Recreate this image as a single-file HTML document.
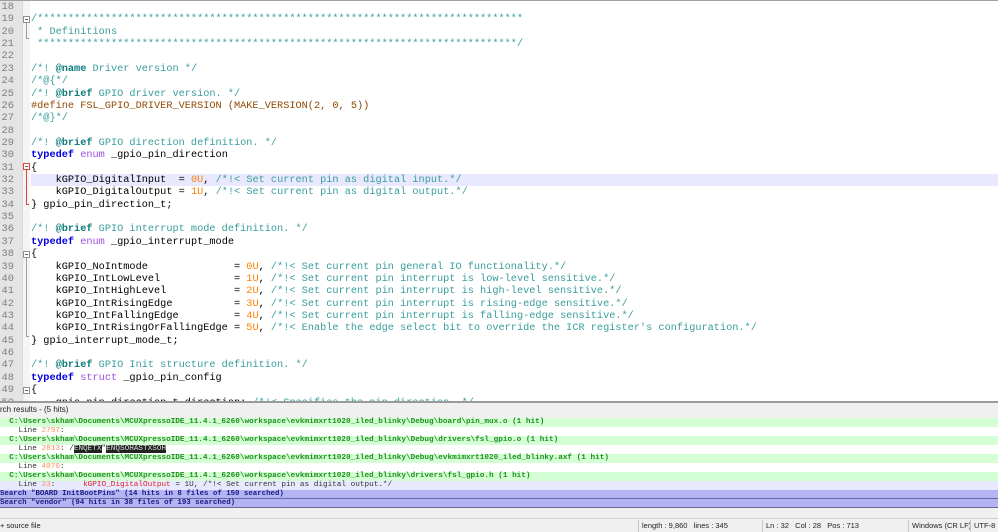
<!DOCTYPE html>
<html><head><meta charset="utf-8"><style>
*{margin:0;padding:0;box-sizing:border-box}
body{width:998px;height:532px;overflow:hidden;background:#fff;position:relative;font-family:"Liberation Mono",monospace}
#ed{position:absolute;left:0;top:0;width:998px;height:401px;overflow:hidden;border-top:1px solid #a0a0a0;background:#fff}
#gut{position:absolute;left:0;top:0;width:22px;height:401px;background:#e4e4e4}
#fold{position:absolute;left:22px;top:0;width:8px;height:401px;background:#f4f4f4;border-left:1px solid #d8d8d8}
.l{position:absolute;left:0;height:12.36px;width:998px;font-size:10.25px;line-height:12.36px;white-space:pre}
.n{position:absolute;left:0;width:14px;text-align:right;color:#808080;font-size:10.4px}
.c{position:absolute;left:31px}
.cur{background:#e8e8ff}
.cm{color:#3a9d9d}.b{color:#0e7c7c;font-weight:bold}.kw{color:#0000e0;font-weight:bold}.en{color:#9a4fe0}.nu{color:#ff8000}.pp{color:#904800}
#hdr{position:absolute;left:0;top:401px;width:998px;height:17px;background:#f0f0f0;border-top:2px solid #9a9a9a;font-family:"Liberation Sans",sans-serif;font-size:8px;line-height:14px;color:#222}
.r{position:absolute;left:0;width:998px;height:9px;font-size:7.7px;line-height:9px;white-space:pre;font-weight:bold}
.g{background:#d4ffd4;color:#1f8f1f}
.w{background:#fff;color:#333;font-weight:normal}
.sr{background:#b4b4f4;color:#1a1a80;border-bottom:1px solid #6a6a9a;font-size:7.4px}
#gray{position:absolute;left:0;top:508px;width:998px;height:10px;background:#f0f0f0}
#st{position:absolute;left:0;top:518px;width:998px;height:14px;background:#f0f0f0;border-top:1px solid #d0d0d0;font-family:"Liberation Sans",sans-serif;font-size:7.5px;line-height:13px;color:#222}
#st span{position:absolute;top:0}
.sep{position:absolute;top:1px;width:1px;height:12px;background:#c8c8c8}
.fb{position:absolute;left:23px;width:7px;height:7px;border:1px solid #909090;background:#fff}
.fb::after{content:"";position:absolute;left:1px;top:2px;width:3px;height:1px;background:#606060}
</style></head><body>
<div id="ed">
<div id="gut"></div><div id="fold"></div>
<div class="fb" style="top:15px"></div>
<div style="position:absolute;left:26px;top:22px;width:1px;height:16px;background:#a0a0a0"></div>
<div style="position:absolute;left:26px;top:37px;width:3px;height:1px;background:#a0a0a0"></div>
<div style="position:absolute;left:26px;top:168px;width:1px;height:36px;background:#e04040"></div>
<div style="position:absolute;left:26px;top:203px;width:3px;height:1px;background:#e04040"></div>
<div class="fb" style="top:162px;border-color:#e04040"></div>
<div class="fb" style="top:250px"></div>
<div style="position:absolute;left:26px;top:257px;width:1px;height:79px;background:#a0a0a0"></div>
<div style="position:absolute;left:26px;top:335px;width:3px;height:1px;background:#a0a0a0"></div>
<div class="fb" style="top:386px"></div>
<div class="l" style="top:0px"><span class="n">18</span></div>
<div class="l" style="top:12.36px"><span class="n">19</span><span class="c cm">/*******************************************************************************</span></div>
<div class="l" style="top:24.72px"><span class="n">20</span><span class="c cm"> * Definitions</span></div>
<div class="l" style="top:37.08px"><span class="n">21</span><span class="c cm"> ******************************************************************************/</span></div>
<div class="l" style="top:49.44px"><span class="n">22</span></div>
<div class="l" style="top:61.8px"><span class="n">23</span><span class="c cm">/*! <span class="b">@name</span> Driver version */</span></div>
<div class="l" style="top:74.16px"><span class="n">24</span><span class="c cm">/*@{*/</span></div>
<div class="l" style="top:86.52px"><span class="n">25</span><span class="c cm">/*! <span class="b">@brief</span> GPIO driver version. */</span></div>
<div class="l" style="top:98.88px"><span class="n">26</span><span class="c pp">#define FSL_GPIO_DRIVER_VERSION (MAKE_VERSION(2, 0, 5))</span></div>
<div class="l" style="top:111.24px"><span class="n">27</span><span class="c cm">/*@}*/</span></div>
<div class="l" style="top:123.6px"><span class="n">28</span></div>
<div class="l" style="top:135.96px"><span class="n">29</span><span class="c cm">/*! <span class="b">@brief</span> GPIO direction definition. */</span></div>
<div class="l" style="top:148.32px"><span class="n">30</span><span class="c"><span class="kw">typedef</span> <span class="en">enum</span> _gpio_pin_direction</span></div>
<div class="l" style="top:160.68px"><span class="n">31</span><span class="c">{</span></div>
<div class="l cur" style="top:173.04px;left:31px;width:967px"></div>
<div class="l" style="top:173.04px"><span class="n">32</span><span class="c">    kGPIO_DigitalInput  = <span class="nu">0U</span>, <span class="cm">/*!&lt; Set current pin as digital input.*/</span></span></div>
<div class="l" style="top:185.4px"><span class="n">33</span><span class="c">    kGPIO_DigitalOutput = <span class="nu">1U</span>, <span class="cm">/*!&lt; Set current pin as digital output.*/</span></span></div>
<div class="l" style="top:197.76px"><span class="n">34</span><span class="c">} gpio_pin_direction_t;</span></div>
<div class="l" style="top:210.12px"><span class="n">35</span></div>
<div class="l" style="top:222.48px"><span class="n">36</span><span class="c cm">/*! <span class="b">@brief</span> GPIO interrupt mode definition. */</span></div>
<div class="l" style="top:234.84px"><span class="n">37</span><span class="c"><span class="kw">typedef</span> <span class="en">enum</span> _gpio_interrupt_mode</span></div>
<div class="l" style="top:247.2px"><span class="n">38</span><span class="c">{</span></div>
<div class="l" style="top:259.56px"><span class="n">39</span><span class="c">    kGPIO_NoIntmode              = <span class="nu">0U</span>, <span class="cm">/*!&lt; Set current pin general IO functionality.*/</span></span></div>
<div class="l" style="top:271.92px"><span class="n">40</span><span class="c">    kGPIO_IntLowLevel            = <span class="nu">1U</span>, <span class="cm">/*!&lt; Set current pin interrupt is low-level sensitive.*/</span></span></div>
<div class="l" style="top:284.28px"><span class="n">41</span><span class="c">    kGPIO_IntHighLevel           = <span class="nu">2U</span>, <span class="cm">/*!&lt; Set current pin interrupt is high-level sensitive.*/</span></span></div>
<div class="l" style="top:296.64px"><span class="n">42</span><span class="c">    kGPIO_IntRisingEdge          = <span class="nu">3U</span>, <span class="cm">/*!&lt; Set current pin interrupt is rising-edge sensitive.*/</span></span></div>
<div class="l" style="top:309px"><span class="n">43</span><span class="c">    kGPIO_IntFallingEdge         = <span class="nu">4U</span>, <span class="cm">/*!&lt; Set current pin interrupt is falling-edge sensitive.*/</span></span></div>
<div class="l" style="top:321.36px"><span class="n">44</span><span class="c">    kGPIO_IntRisingOrFallingEdge = <span class="nu">5U</span>, <span class="cm">/*!&lt; Enable the edge select bit to override the ICR register's configuration.*/</span></span></div>
<div class="l" style="top:333.72px"><span class="n">45</span><span class="c">} gpio_interrupt_mode_t;</span></div>
<div class="l" style="top:346.08px"><span class="n">46</span></div>
<div class="l" style="top:358.44px"><span class="n">47</span><span class="c cm">/*! <span class="b">@brief</span> GPIO Init structure definition. */</span></div>
<div class="l" style="top:370.8px"><span class="n">48</span><span class="c"><span class="kw">typedef</span> <span class="en">struct</span> _gpio_pin_config</span></div>
<div class="l" style="top:383.16px"><span class="n">49</span><span class="c">{</span></div>
<div class="l" style="top:395.52px"><span class="n">50</span><span class="c">    gpio_pin_direction_t direction; <span class="cm">/*!&lt; Specifies the pin direction. */</span></span></div>
</div>
<div id="hdr">rch results - (5 hits)</div>
<div class="r g" style="top:418px">  C:\Users\skham\Documents\MCUXpressoIDE_11.4.1_6260\workspace\evkmimxrt1020_iled_blinky\Debug\board\pin_mux.o (1 hit)</div>
<div class="r w" style="top:427px">    Line <span style="color:#ff9060">2797</span>:</div>
<div class="r g" style="top:436px">  C:\Users\skham\Documents\MCUXpressoIDE_11.4.1_6260\workspace\evkmimxrt1020_iled_blinky\Debug\drivers\fsl_gpio.o (1 hit)</div>
<div class="r w" style="top:445px">    Line <span style="color:#ff9060">2813</span>: /<span style="background:#222;color:#ddd">ENQETX</span>"<span style="background:#222;color:#ddd">ENQSOHASTXSOH</span></div>
<div class="r g" style="top:454px">  C:\Users\skham\Documents\MCUXpressoIDE_11.4.1_6260\workspace\evkmimxrt1020_iled_blinky\Debug\evkmimxrt1020_iled_blinky.axf (1 hit)</div>
<div class="r w" style="top:463px">    Line <span style="color:#ff9060">4070</span>:</div>
<div class="r g" style="top:472px">  C:\Users\skham\Documents\MCUXpressoIDE_11.4.1_6260\workspace\evkmimxrt1020_iled_blinky\drivers\fsl_gpio.h (1 hit)</div>
<div class="r w" style="top:481px;background:#e8e8ff">    Line <span style="color:#ff9060">33</span>:      <span style="color:#e02020">kGPIO_DigitalOutput</span> = 1U, /*!&lt; Set current pin as digital output.*/</div>
<div class="r sr" style="top:490px">Search "BOARD InitBootPins" (14 hits in 8 files of 150 searched)</div>
<div class="r sr" style="top:499px">Search "vendor" (94 hits in 38 files of 193 searched)</div>
<div id="gray"></div>
<div id="st"><span style="left:0">+ source file</span>
<div class="sep" style="left:638px"></div><span style="left:642px">length : 9,860&nbsp;&nbsp;&nbsp;lines : 345</span>
<div class="sep" style="left:762px"></div><span style="left:766px">Ln : 32&nbsp;&nbsp;&nbsp;Col : 28&nbsp;&nbsp;&nbsp;Pos : 713</span>
<div class="sep" style="left:908px"></div><span style="left:912px">Windows (CR LF)</span>
<div class="sep" style="left:970px"></div><span style="left:974px">UTF-8</span>
</div>
</body></html>
